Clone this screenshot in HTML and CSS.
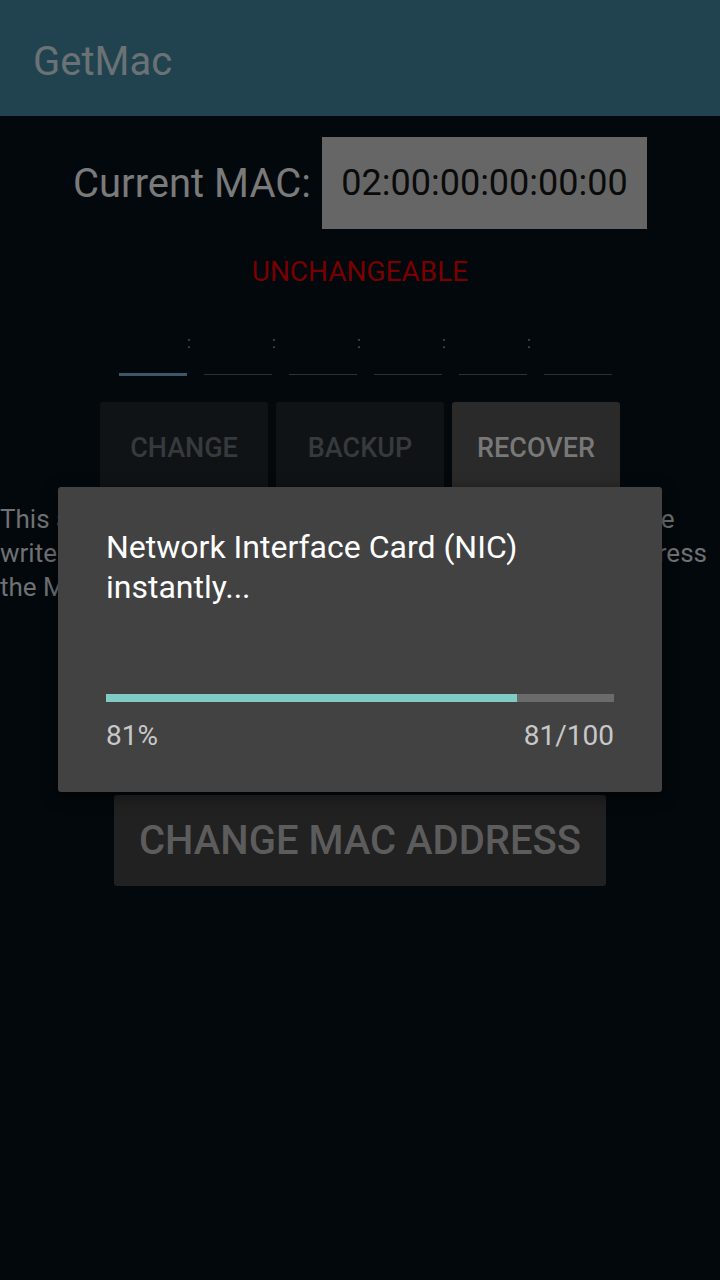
FILE: index.html
```html
<!DOCTYPE html>
<html>
<head>
<meta charset="utf-8">
<link rel="stylesheet" href="styles.css">
</head>
<body>
<div class="screen">
  <header class="appbar"><span class="title">GetMac</span></header>
  <main class="content">
    <div class="mac-row">
      <span class="mac-label">Current MAC:</span>
      <span class="mac-box">02:00:00:00:00:00</span>
    </div>
    <div class="status">UNCHANGEABLE</div>
    <div class="inputs">
      <span class="field active"></span><span class="colon">:</span>
      <span class="field"></span><span class="colon">:</span>
      <span class="field"></span><span class="colon">:</span>
      <span class="field"></span><span class="colon">:</span>
      <span class="field"></span><span class="colon">:</span>
      <span class="field"></span>
    </div>
    <div class="actions">
      <button class="btn dim">CHANGE</button>
      <button class="btn dim">BACKUP</button>
      <button class="btn">RECOVER</button>
    </div>
    <p class="desc">This app needs root access. A backup is made first, before<br>write operations are performed to replace with a new address<br>the MAC of your Network Interface Card (NIC) instantly...</p>
    <div class="big-wrap"><button class="big-btn">CHANGE MAC ADDRESS</button></div>
  </main>
  <div class="dialog">
    <div class="msg">Network Interface Card (NIC)<br>instantly...</div>
    <div class="track"><div class="fill" style="width:81%"></div></div>
    <div class="counts"><span>81%</span><span>81/100</span></div>
  </div>
</div>
</body>
</html>
```
FILE: styles.css
```css
* { box-sizing: border-box; }
html, body { margin: 0; padding: 0; background: #03080c; }
body { font-family: Roboto, "Noto Sans", sans-serif; }
.screen { position: relative; width: 720px; height: 1280px; overflow: hidden; background: #03080c; }
.appbar { height: 116px; background: #21434f; display: flex; align-items: center; padding-left: 33px; padding-top: 8px; }
.title { font-size: 40px; color: #6b7275; line-height: 1; }
.content { display: flex; flex-direction: column; }
.mac-row { display: flex; justify-content: center; align-items: center; gap: 11px; margin-top: 21px; }
.mac-label { font-size: 40px; color: #7a7a7a; }
.mac-box { width: 325px; height: 92px; background: #666666; color: #0a0a0a; font-size: 36px; display: flex; align-items: center; justify-content: center; }
.status { text-align: center; color: #780000; font-size: 28px; line-height: 32px; margin-top: 27px; }
.inputs { display: flex; justify-content: center; margin-top: 28px; padding-left: 11px; height: 60px; align-items: flex-end; }
.field { width: 68px; height: 1px; background: #2d3134; margin-bottom: 1px; }
.field.active { height: 3px; background: #3c5867; margin-bottom: 0; }
.colon { width: 17px; color: #55595c; font-size: 16px; line-height: 20px; align-self: center; padding-left: 0; margin-top: -6px; }
.actions { display: flex; justify-content: center; gap: 8px; margin-top: 26px; }
.btn { width: 168px; height: 92px; border: none; border-radius: 3px; background: #2a2a2a; color: #787878; font-family: Roboto, sans-serif; font-weight: 500; font-size: 27px; padding: 0; }
.btn.dim { background: #101316; color: #363a3d; }
.desc { margin: 8px 0 0 0; font-size: 26px; line-height: 34px; color: #6f7173; white-space: nowrap; overflow: hidden; }
.big-wrap { display: flex; justify-content: center; margin-top: 191px; }
.big-btn { width: 492px; height: 91px; border: none; border-radius: 3px; background: #212121; color: #5c5c5c; font-family: Roboto, sans-serif; font-weight: 500; font-size: 40px; padding: 0; }
.dialog { position: absolute; left: 58px; top: 487px; width: 604px; height: 305px; background: #424242; border-radius: 3px; padding: 40px 48px 0 48px; box-shadow: 0 4px 16px rgba(0,0,0,0.5); }
.msg { color: #ffffff; font-size: 32px; line-height: 40px; }
.track { margin-top: 87px; height: 8px; background: #6b6b6b; }
.fill { height: 100%; background: #80cbc4; }
.counts { display: flex; justify-content: space-between; margin-top: 18px; color: #c8c8c8; font-size: 28px; line-height: 32px; }
```
